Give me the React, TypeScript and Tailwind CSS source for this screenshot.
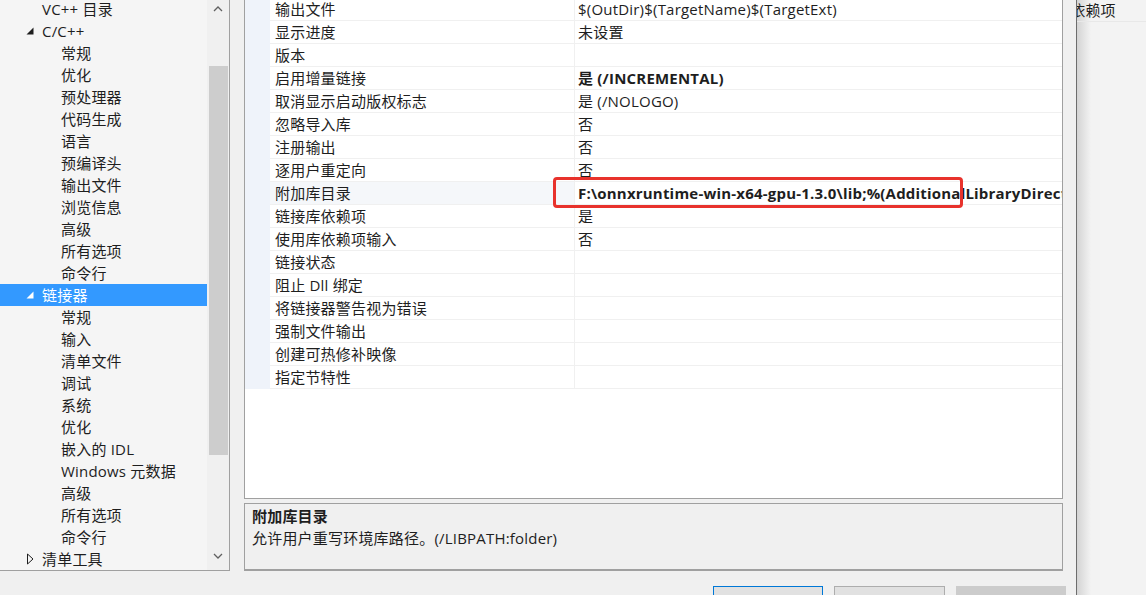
import React from "react";

type TreeItem = { text: string; level: number; arrow?: "open" | "closed"; selected?: boolean };

const tree: TreeItem[] = [
  { text: "VC++ 目录", level: 0 },
  { text: "C/C++", level: 0, arrow: "open" },
  { text: "常规", level: 1 },
  { text: "优化", level: 1 },
  { text: "预处理器", level: 1 },
  { text: "代码生成", level: 1 },
  { text: "语言", level: 1 },
  { text: "预编译头", level: 1 },
  { text: "输出文件", level: 1 },
  { text: "浏览信息", level: 1 },
  { text: "高级", level: 1 },
  { text: "所有选项", level: 1 },
  { text: "命令行", level: 1 },
  { text: "链接器", level: 0, arrow: "open", selected: true },
  { text: "常规", level: 1 },
  { text: "输入", level: 1 },
  { text: "清单文件", level: 1 },
  { text: "调试", level: 1 },
  { text: "系统", level: 1 },
  { text: "优化", level: 1 },
  { text: "嵌入的 IDL", level: 1 },
  { text: "Windows 元数据", level: 1 },
  { text: "高级", level: 1 },
  { text: "所有选项", level: 1 },
  { text: "命令行", level: 1 },
  { text: "清单工具", level: 0, arrow: "closed" },
];

type Prop = { name: string; value: string; bold?: boolean; current?: boolean };

const props: Prop[] = [
  { name: "输出文件", value: "$(OutDir)$(TargetName)$(TargetExt)" },
  { name: "显示进度", value: "未设置" },
  { name: "版本", value: "" },
  { name: "启用增量链接", value: "是 (/INCREMENTAL)", bold: true },
  { name: "取消显示启动版权标志", value: "是 (/NOLOGO)" },
  { name: "忽略导入库", value: "否" },
  { name: "注册输出", value: "否" },
  { name: "逐用户重定向", value: "否" },
  { name: "附加库目录", value: "F:\\onnxruntime-win-x64-gpu-1.3.0\\lib;%(AdditionalLibraryDirectories)", bold: true, current: true },
  { name: "链接库依赖项", value: "是" },
  { name: "使用库依赖项输入", value: "否" },
  { name: "链接状态", value: "" },
  { name: "阻止 Dll 绑定", value: "" },
  { name: "将链接器警告视为错误", value: "" },
  { name: "强制文件输出", value: "" },
  { name: "创建可热修补映像", value: "" },
  { name: "指定节特性", value: "" },
];

function Arrow({ kind, white }: { kind: "open" | "closed"; white?: boolean }) {
  if (kind === "open")
    return (
      <svg width="8" height="8" viewBox="0 0 8 8">
        <path d="M7.5 0.5 L7.5 7.5 L0.5 7.5 Z" fill={white ? "#ffffff" : "#1e1e1e"} />
      </svg>
    );
  return (
    <svg width="8" height="12" viewBox="0 0 8 12">
      <path d="M1.5 1 L7 6 L1.5 11 Z" fill="none" stroke="#1e1e1e" strokeWidth="1" />
    </svg>
  );
}

function Chevron({ up }: { up?: boolean }) {
  return (
    <svg width="10" height="6" viewBox="0 0 10 6">
      <path d={up ? "M1 5 L5 1 L9 5" : "M1 1 L5 5 L9 1"} fill="none" stroke="#606060" strokeWidth="1.3" />
    </svg>
  );
}

export default function App() {
  return (
    <div className="flex h-[595px] w-[1146px] overflow-hidden bg-[#f0f0f0] text-[15px] tracking-[0.2px] text-[#1e1e1e] font-['Open_Sans','Noto_Sans_CJK_SC',sans-serif]">
      {/* dialog */}
      <div className="flex w-[1076px] flex-col">
        <div className="flex h-[571px]">
          {/* property tree */}
          <div className="flex h-[571px] w-[230px] border-r border-b border-[#a0a0a0] bg-[#f5f5f5]">
            <div className="w-[207px] overflow-hidden">
              <div className="-mt-[2px]">
                {tree.map((t, i) => (
                  <div
                    key={i}
                    className={`flex h-[22px] items-center whitespace-nowrap ${t.selected ? "bg-[#3399ff] text-white" : ""}`}
                  >
                    <div className={`flex shrink-0 justify-end pr-[8px] ${t.level === 1 ? "w-[61px]" : "w-[42px]"}`}>
                      {t.arrow && <Arrow kind={t.arrow} white={t.selected} />}
                    </div>
                    <span>{t.text}</span>
                  </div>
                ))}
              </div>
            </div>
            <div className="flex w-[22px] flex-col items-center bg-[#f0f0f0]">
              <div className="flex h-[17px] items-center justify-center pt-[1px]">
                <Chevron up />
              </div>
              <div className="mt-[49px] h-[389px] w-[19px] bg-[#cdcdcd]" />
              <div className="flex-1" />
              <div className="mb-[6px] flex h-[17px] items-center justify-center">
                <Chevron />
              </div>
            </div>
          </div>

          {/* grid + description */}
          <div className="ml-[14px] flex w-[819px] flex-col">
            <div className="relative h-[499px] overflow-hidden border-x border-b border-[#a0a0a0] bg-white">
              <div className="-mt-[2px]">
                {props.map((p, i) => (
                  <div key={i} className="flex h-[23px]">
                    <div className="w-[25px] shrink-0 bg-[#eff3fa]" />
                    <div
                      className={`flex w-[304px] shrink-0 items-center border-b border-[#f0f0f0] pl-[5px] whitespace-nowrap ${p.current ? "bg-[#f5f7fa]" : ""}`}
                    >
                      {p.name}
                    </div>
                    <div
                      className={`flex min-w-0 flex-1 items-center overflow-hidden border-b border-l border-[#f0f0f0] pl-[3px] whitespace-nowrap ${p.bold ? "font-bold" : ""}`}
                    >
                      {p.value}
                    </div>
                  </div>
                ))}
              </div>
              {/* red annotation */}
              <div className="absolute left-[308px] top-[177px] h-[31px] w-[410px] rounded-[4px] border-[3px] border-[#e8322c]" />
            </div>
            <div className="mt-[4px] h-[68px] border border-b-2 border-[#a0a0a0] bg-[#f0f0f0] px-[7px] pt-[1px]">
              <div className="font-bold leading-[22px]">附加库目录</div>
              <div className="leading-[22px]">允许用户重写环境库路径。(/LIBPATH:folder)</div>
            </div>
          </div>
        </div>

        {/* buttons */}
        <div className="flex justify-end gap-[11px] pt-[15px] pr-[10px]">
          <div className="h-[30px] w-[110px] border border-[#0078d7] bg-[#e1e1e1]" />
          <div className="h-[30px] w-[111px] border border-[#adadad] bg-[#e1e1e1]" />
          <div className="h-[30px] w-[110px] border border-[#cccccc] bg-[#cccccc]" />
        </div>
      </div>

      <div className="w-px bg-[#6d6d6d]" />

      {/* window behind */}
      <div className="relative flex-1 overflow-hidden bg-[#f3f3f3]">
        <div className="absolute inset-y-0 left-0 w-[14px] bg-gradient-to-r from-[#d4d4d4] to-transparent" />
        <div className="relative -ml-[22px] flex h-[22px] items-center border-b border-[#e8e8e8] whitespace-nowrap">
          库依赖项
        </div>
      </div>
    </div>
  );
}
